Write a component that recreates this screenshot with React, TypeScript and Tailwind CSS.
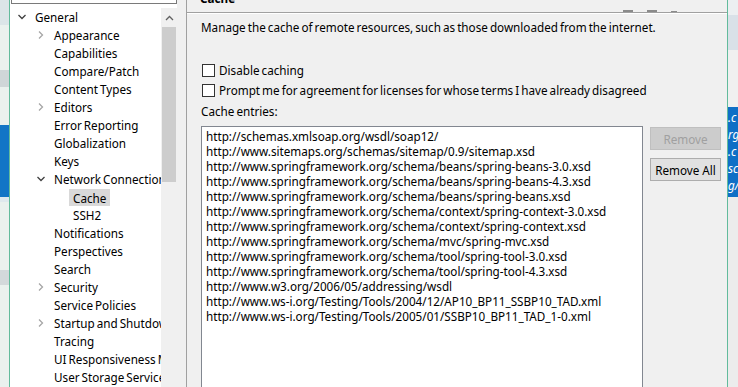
type TreeNode = {
  label: string
  level: 0 | 1 | 2
  state?: "open" | "closed"
  selected?: boolean
}

const treeItems: TreeNode[] = [
  { label: "General", level: 0, state: "open" },
  { label: "Appearance", level: 1, state: "closed" },
  { label: "Capabilities", level: 1 },
  { label: "Compare/Patch", level: 1 },
  { label: "Content Types", level: 1 },
  { label: "Editors", level: 1, state: "closed" },
  { label: "Error Reporting", level: 1 },
  { label: "Globalization", level: 1 },
  { label: "Keys", level: 1 },
  { label: "Network Connections", level: 1, state: "open" },
  { label: "Cache", level: 2, selected: true },
  { label: "SSH2", level: 2 },
  { label: "Notifications", level: 1 },
  { label: "Perspectives", level: 1 },
  { label: "Search", level: 1 },
  { label: "Security", level: 1, state: "closed" },
  { label: "Service Policies", level: 1 },
  { label: "Startup and Shutdown", level: 1, state: "closed" },
  { label: "Tracing", level: 1 },
  { label: "UI Responsiveness Monitoring", level: 1 },
  { label: "User Storage Service", level: 1 },
]

const levelPad = ["pl-[4px]", "pl-[23px]", "pl-[42px]"]

const cacheEntries = [
  "http://schemas.xmlsoap.org/wsdl/soap12/",
  "http://www.sitemaps.org/schemas/sitemap/0.9/sitemap.xsd",
  "http://www.springframework.org/schema/beans/spring-beans-3.0.xsd",
  "http://www.springframework.org/schema/beans/spring-beans-4.3.xsd",
  "http://www.springframework.org/schema/beans/spring-beans.xsd",
  "http://www.springframework.org/schema/context/spring-context-3.0.xsd",
  "http://www.springframework.org/schema/context/spring-context.xsd",
  "http://www.springframework.org/schema/mvc/spring-mvc.xsd",
  "http://www.springframework.org/schema/tool/spring-tool-3.0.xsd",
  "http://www.springframework.org/schema/tool/spring-tool-4.3.xsd",
  "http://www.w3.org/2006/05/addressing/wsdl",
  "http://www.ws-i.org/Testing/Tools/2004/12/AP10_BP11_SSBP10_TAD.xml",
  "http://www.ws-i.org/Testing/Tools/2005/01/SSBP10_BP11_TAD_1-0.xml",
]

function Chevron({ state }: { state?: "open" | "closed" }) {
  if (!state) return null
  if (state === "open") {
    return (
      <svg width="10" height="10" viewBox="0 0 10 10">
        <polyline points="1.5,3 5,6.5 8.5,3" fill="none" stroke="#404040" strokeWidth="1.3" />
      </svg>
    )
  }
  return (
    <svg width="10" height="10" viewBox="0 0 10 10">
      <polyline points="3,1.5 6.5,5 3,8.5" fill="none" stroke="#a6a6a6" strokeWidth="1.3" />
    </svg>
  )
}

function Checkbox({ label }: { label: string }) {
  return (
    <div className="flex items-center h-[20px] pl-[1px]">
      <span className="w-[13px] h-[13px] border border-[#333333] bg-white" />
      <span className="ml-[4px]">{label}</span>
    </div>
  )
}

export default function App() {
  return (
    <div className="w-[738px] h-[387px] flex overflow-hidden bg-[#f0f0f0] text-[11.7px] leading-[16px] [word-spacing:-1px] text-black font-['Noto_Sans',sans-serif]">
      {/* window behind, left edge */}
      <div className="w-[9px] flex flex-col bg-[#eaf1ee]">
        <div className="h-[25px] bg-[#dbe5e8]" />
        <div className="h-[45px]" />
        <div className="h-[17px] bg-[#cfd6d8]" />
        <div className="h-[38px]" />
        <div className="h-[72px] bg-[#1275c6]" />
        <div className="h-[5px] bg-[#dfe9ee]" />
        <div className="h-[68px]" />
        <div className="h-[15px] bg-[#d3d9db]" />
      </div>
      <div className="w-px bg-[#62bb9c]" />

      {/* tree panel */}
      <div className="w-[167px] bg-white flex flex-col">
        <div className="h-[4px] ml-px border-x border-b border-[#7a7a7a]" />
        <div className="flex flex-1 mt-[4px] min-h-0">
          <div className="flex-1 min-w-0 overflow-hidden whitespace-nowrap">
            {treeItems.map((item) => (
              <div key={item.label} className={`h-[18px] flex items-center ${levelPad[item.level]}`}>
                <span className="w-[16px] h-[18px] flex items-center justify-center mr-[5px] shrink-0">
                  <Chevron state={item.state} />
                </span>
                {item.selected ? (
                  <span className="-ml-[4px] px-[4px] h-[17px] mt-px flex items-center bg-[#d9d9d9]">{item.label}</span>
                ) : (
                  <span>{item.label}</span>
                )}
              </div>
            ))}
          </div>
          <div className="w-[16px] bg-[#f0f0f0] flex flex-col items-center">
            <div className="h-[19px] flex items-center justify-center">
              <svg width="9" height="6" viewBox="0 0 9 6">
                <polyline points="1,5 4.5,1.5 8,5" fill="none" stroke="#606060" strokeWidth="1.3" />
              </svg>
            </div>
            <div className="w-[14px] h-[155px] bg-[#cdcdcd]" />
          </div>
        </div>
      </div>

      {/* sash */}
      <div className="w-[9px]" />
      <div className="w-px bg-[#a0a0a0]" />

      {/* preference page */}
      <div className="w-[540px] flex flex-col">
        <div className="h-[12px] overflow-hidden flex pl-[13px] pr-[50px]">
          <span className="-mt-[10px] font-bold">Cache</span>
          <div className="flex-1" />
          <div className="flex gap-[14px] items-end h-[12px]">
            <span className="w-[10px] h-[2px] bg-[#8a8a8a]" />
            <span className="w-[10px] h-[2px] bg-[#8a8a8a]" />
            <span className="w-[6px] h-[1px] bg-[#8a8a8a]" />
          </div>
        </div>
        <div className="h-px bg-[#a0a0a0]" />
        <div className="h-px bg-white" />

        <div className="pl-[14px] pr-[6px] flex flex-col flex-1 min-h-0">
          <div className="mt-[5px]">Manage the cache of remote resources, such as those downloaded from the internet.</div>
          <div className="mt-[25px]">
            <Checkbox label="Disable caching" />
            <Checkbox label="Prompt me for agreement for licenses for whose terms I have already disagreed" />
          </div>
          <div className="mt-[3px]">Cache entries:</div>
          <div className="flex flex-1 mt-[7px] min-h-0">
            <div className="w-[442px] border border-[#828790] bg-white pt-[2px] pl-[4px] leading-[15px] whitespace-nowrap overflow-hidden -mb-[20px]">
              {cacheEntries.map((entry) => (
                <div key={entry}>{entry}</div>
              ))}
            </div>
            <div className="ml-[7px] mt-px flex flex-col gap-[8px] [word-spacing:0px]">
              <button className="w-[71px] h-[23px] border border-[#bfbfbf] bg-[#cccccc] text-[#a0a0a0]">Remove</button>
              <button className="w-[71px] h-[23px] border border-[#adadad] bg-[#e1e1e1]">Remove All</button>
            </div>
          </div>
        </div>
      </div>

      <div className="w-px bg-[#62bb9c]" />

      {/* window behind, right edge */}
      <div className="flex-1 flex flex-col overflow-hidden whitespace-nowrap">
        <div className="h-[15px] bg-[#eceff1]" />
        <div className="h-[35px] bg-[#d9e1e8]" />
        <div className="h-[57px] bg-[#f0f0f0]" />
        <div className="h-[90px] bg-[#0f6fc6] text-white italic pt-[2px] leading-[17px]">
          <div>.c</div>
          <div>rg</div>
          <div>.c</div>
          <div>sc</div>
          <div>g/</div>
        </div>
        <div className="flex-1 bg-[#ececec]" />
      </div>
    </div>
  )
}
